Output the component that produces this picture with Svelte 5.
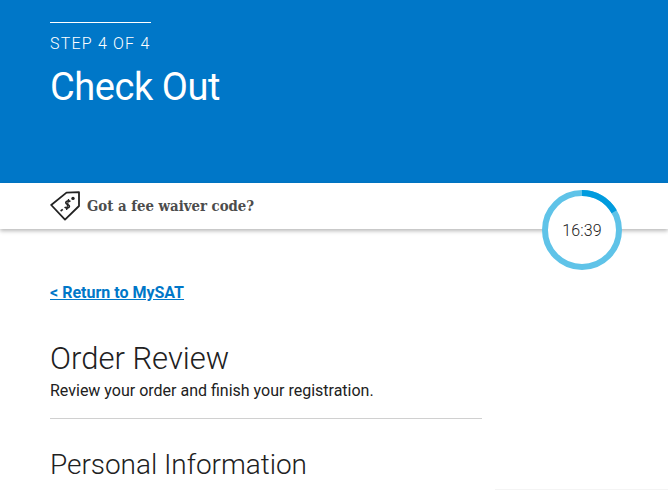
<script lang="ts">
	let total = 1200;
	let left = 999;
	let radius = 37;
	let circumference = 2 * Math.PI * radius;
	let used = circumference * (1 - left / total);
</script>

<div class="page">
	<header class="banner">
		<div class="rule"></div>
		<div class="step">STEP 4 OF 4</div>
		<h1>Check Out</h1>
	</header>

	<div class="waiver">
		<svg class="tag" width="32" height="30" viewBox="0 0 32 30" fill="none" stroke="#222" stroke-width="1.8" stroke-linejoin="round">
			<path d="M1.2 14 L16.5 1.6 L29 1.2 L29 15 L15 28.6 Z" />
			<circle cx="23" cy="7.4" r="1.7" fill="#222" stroke="none" />
			<path d="M20.4 10.6 C19 9.4 16 9.8 15.8 11.6 C15.6 13.6 19.6 13.4 19.4 15.4 C19.2 17.2 16.4 17.6 14.6 16.2" stroke-width="1.7" />
			<path d="M18.6 8 L16.6 19" stroke-width="1.3" />
			<path d="M10.6 20 L12.8 18.4" stroke-width="1.6" />
		</svg>
		<span class="waiver-text">Got a fee waiver code?</span>
	</div>

	<div class="timer">
		<svg width="80" height="80" viewBox="0 0 80 80">
			<circle cx="40" cy="40" r={radius} fill="#fff" stroke="#5fc3e8" stroke-width="6" />
			<circle
				cx="40"
				cy="40"
				r={radius}
				fill="none"
				stroke="#009bde"
				stroke-width="6"
				stroke-dasharray="{used} {circumference}"
				transform="rotate(-90 40 40)"
			/>
		</svg>
		<span class="time">16:39</span>
	</div>

	<main class="content">
		<a href="#mysat" class="back">&lt; Return to MySAT</a>
		<h2>Order Review</h2>
		<p>Review your order and finish your registration.</p>
		<hr />
		<h3>Personal Information</h3>
	</main>
	<div class="edge"></div>
</div>

<style>
	:global(body) {
		margin: 0;
		background: #fff;
		overflow: hidden;
	}

	.page {
		position: relative;
		height: 490px;
		overflow: hidden;
		font-family: Roboto, 'Liberation Sans', sans-serif;
		color: #212121;
	}

	.banner {
		height: 183px;
		box-sizing: border-box;
		padding: 22px 50px 0;
		background: #0077c8;
		color: #fff;
	}

	.rule {
		width: 101px;
		height: 1px;
		background: #fff;
	}

	.step {
		margin-top: 11px;
		font-size: 16px;
		font-weight: 300;
		line-height: 20px;
		letter-spacing: 1.2px;
	}

	h1 {
		margin: 10px 0 0;
		font-size: 38px;
		font-weight: 400;
		line-height: 46px;
		letter-spacing: -0.45px;
	}

	.waiver {
		display: flex;
		align-items: center;
		gap: 5px;
		height: 46px;
		padding-left: 50px;
		background: #fff;
		box-shadow: 0 2px 4px rgba(0, 0, 0, 0.28);
		font-family: 'DejaVu Serif Condensed', 'DejaVu Serif', serif;
		font-size: 14.8px;
		font-weight: 700;
		color: #4c4c4c;
	}

	.waiver-text {
		margin-bottom: 2px;
	}

	.tag {
		flex: none;
	}

	.timer {
		position: absolute;
		left: 542px;
		top: 190px;
		width: 80px;
		height: 80px;
		display: flex;
		align-items: center;
		justify-content: center;
	}

	.timer svg {
		position: absolute;
		inset: 0;
	}

	.time {
		position: relative;
		font-size: 16px;
		font-weight: 300;
		letter-spacing: 0.1px;
		color: #212121;
	}

	.content {
		width: 432px;
		padding: 54px 0 0 50px;
	}

	.back {
		display: block;
		font-size: 16px;
		font-weight: 700;
		line-height: 20px;
		color: #0077c8;
		text-decoration: underline;
	}

	h2 {
		margin: 38px 0 0;
		font-size: 31px;
		font-weight: 300;
		line-height: 36px;
	}

	p {
		margin: 4px 0 0;
		font-size: 16px;
		line-height: 20px;
	}

	hr {
		margin: 17px 0 0;
		border: none;
		border-top: 1px solid #d0d0d0;
	}

	h3 {
		margin: 29px 0 0;
		font-size: 28px;
		font-weight: 300;
		line-height: 34px;
		letter-spacing: -0.05px;
	}

	.edge {
		position: absolute;
		left: 495px;
		right: 0;
		bottom: 0;
		height: 1px;
		background: #f4f4f4;
	}
</style>
